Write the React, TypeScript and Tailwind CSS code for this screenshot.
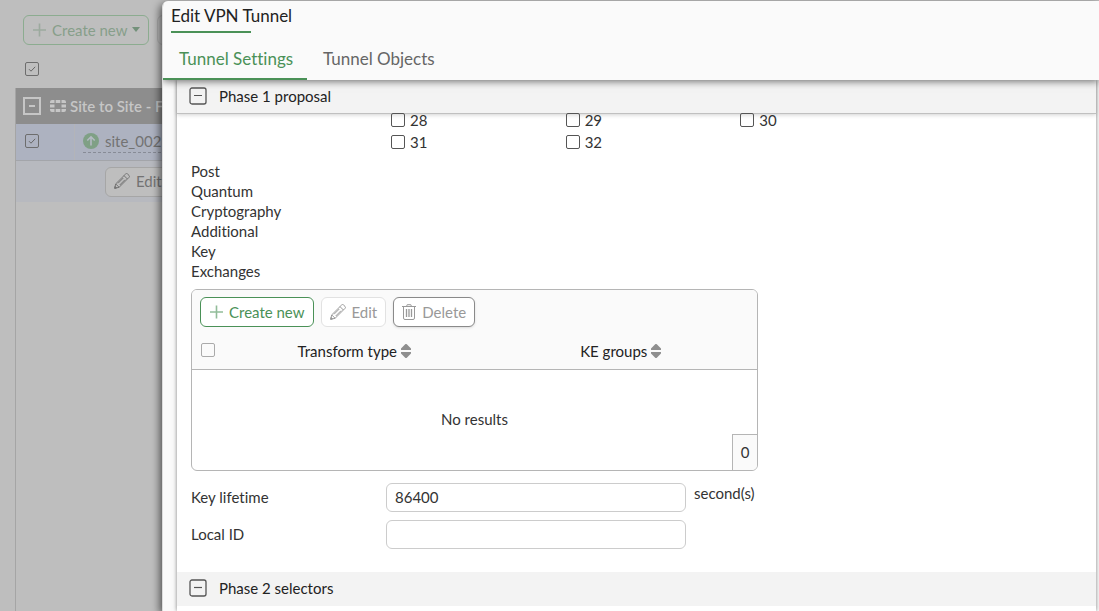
import React, { useState } from 'react';
import clsx from 'clsx';

interface SectionHeaderProps {
    title: string;
    sticky?: boolean;
}

interface ToolButtonProps {
    label: string;
    icon: React.ReactNode;
    className: string;
    disabled?: boolean;
}

const DH_GROUPS = ['28', '29', '30', '31', '32'];
const COLUMNS = ['Transform type', 'KE groups'];
const TABS = ['Tunnel Settings', 'Tunnel Objects'];

const PlusIcon = () => (
    <svg className="size-3.5 shrink-0 opacity-60" viewBox="0 0 14 14" fill="none" stroke="currentColor" strokeWidth="1.6">
        <path d="M7.500 .5v13M1 7h13" />
    </svg>
);

const PencilIcon = () => (
    <svg className="size-4 shrink-0" viewBox="0 0 16 16" fill="none" stroke="currentColor" strokeWidth="1" strokeLinejoin="round">
        <path d="M.7 15.3l1-4.4L11.6 1a1.4 1.4 0 0 1 2 0L15 2.4a1.4 1.4 0 0 1 0 2L5.1 14.3z" />
        <path d="M1.7 10.9l3.4 3.4M10 2.6l3.4 3.4M9.3 5L4 10.3M11 6.7L5.7 12" />
        <path d="M.7 15.3l.4-1.9 1.5 1.5z" fill="currentColor" />
    </svg>
);

const TrashIcon = () => (
    <svg className="h-4 w-3.5 shrink-0" viewBox="0 0 14 16" fill="none" stroke="currentColor" strokeWidth="1">
        <path d="M0 2.5h14M4.5 2.5l.7-1.8h3.6l.7 1.8M1.5 2.5v11.5a1.5 1.5 0 0 0 1.5 1.5h8a1.5 1.5 0 0 0 1.5-1.5V2.5" />
        <path d="M4.5 5v8M7 5v8M9.5 5v8" strokeWidth="1.3" />
    </svg>
);

const SortIcon = () => (
    <svg className="h-3.5 w-2.5 shrink-0 text-[#8f8f8f]" viewBox="0 0 10 14" fill="currentColor">
        <path d="M4.2.3a1.2 1.2 0 0 1 1.6 0L10 4.500V6H0V4.500zM4.200 13.700a1.200 1.200 0 0 0 1.600 0L10 9.500V8H0v1.500z" />
    </svg>
);

const FortinetIcon = () => (
    <svg className="h-3 w-4 shrink-0" viewBox="0 0 16 12" fill="currentColor">
        <path d="M5.7 0h4.6v3H5.700zM5.700 9h4.600v3H5.700zM0 4.500h4.500v3H0zM11.500 4.500H16v3h-4.500z" />
        <path d="M2 0h2.500v3H0V2a2 2 0 0 1 2-2zM11.500 0H14a2 2 0 0 1 2 2v1h-4.500zM0 9h4.500v3H2a2 2 0 0 1-2-2zM11.500 9H16v1a2 2 0 0 1-2 2h-2.500z" />
    </svg>
);

const MinusBox = () => (
    <svg className="size-[18px] shrink-0 text-[#555]" viewBox="0 0 18 18" fill="none" stroke="currentColor">
        <rect x="1" y="1" width="16" height="16" rx="2" strokeWidth="1.3" />
        <path d="M5 8.5h8" strokeWidth="1.2" />
    </svg>
);

const SectionHeader: React.FC<SectionHeaderProps> = ({ title, sticky }) => (
    <button
        className={clsx(
            'flex h-[34px] w-full shrink-0 items-center gap-3 bg-[#f3f3f3] px-3 pb-0.5 text-left text-[#222]',
            sticky && 'relative z-10 border-b border-[#c0c0c0] shadow-[0_1px_4px_rgba(0,0,0,0.18)]'
        )}
    >
        <MinusBox />
        {title}
    </button>
);

const ToolButton: React.FC<ToolButtonProps> = ({ label, icon, className, disabled }) => (
    <button
        disabled={disabled}
        className={clsx('flex h-[30px] shrink-0 items-center gap-1.5 rounded-md border px-2 pb-px whitespace-nowrap', className)}
    >
        {icon}
        {label}
    </button>
);

const CheckBox: React.FC<{ className: string; label: string; checked?: boolean }> = ({ className, label, checked }) => (
    <span className="relative flex size-3.5 shrink-0">
        <input
            type="checkbox"
            aria-label={label}
            defaultChecked={checked}
            className={clsx('size-3.5 appearance-none rounded-xs border', className)}
        />
        {checked && (
            <svg className="pointer-events-none absolute inset-0 size-3.5 text-[#666]" viewBox="0 0 14 14" fill="none" stroke="currentColor">
                <path d="M4 7.2l2 2 4.2-4.400" />
            </svg>
        )}
    </span>
);

/* Tunnel list, dimmed behind the drawer */
const TunnelList = () => (
    <div className="flex h-full flex-col overflow-hidden bg-[#bebebe] pl-[15px] text-[#737373]">
        <div className="flex h-[60px] items-center gap-2 pl-2">
            <ToolButton
                label="Create new"
                icon={<PlusIcon />}
                className="border-[#8cac90] text-[#879e8a] after:-ml-0.5 after:border-x-4 after:border-t-[5px] after:border-x-transparent after:border-t-[#73917a] after:content-['']"
            />
            <div className="h-[30px] w-20 rounded-md border border-[#adadad]" />
        </div>
        <div className="flex h-7 items-start pt-0.5 pl-2.5">
            <CheckBox label="Select all" checked className="border-[#6d6d6d]" />
        </div>
        <div className="flex-1 border-l border-[#a5a5a5]">
            <div className="flex h-9 items-center gap-2 bg-[#8d8d8d] pl-[7px] whitespace-nowrap text-[#c6c6c6]">
                <svg className="size-[18px] shrink-0" viewBox="0 0 18 18" fill="none" stroke="currentColor" strokeWidth="2">
                    <path d="M1 1h16v16H1zM6 9h6" />
                </svg>
                <div className="flex items-center gap-1 pl-px">
                    <FortinetIcon />
                    <span className="font-semibold">Site to Site - Fo</span>
                </div>
            </div>
            <div className="flex h-[37px] items-stretch border-b border-[#a3a5aa] bg-[#adb2c0]">
                <div className="flex w-[59px] shrink-0 items-center border-r border-[#b3b4b8] pb-0.5 pl-[9px]">
                    <CheckBox label="Select site_002" checked className="border-[#6d6d6d]" />
                </div>
                <div className="flex items-center pl-2">
                    <a href="#" className="flex h-[22px] items-center gap-1.5 border-b border-dashed border-[#878b96] pb-0.5">
                        <svg className="size-4 shrink-0" viewBox="0 0 16 16">
                            <circle cx="8" cy="8" r="8" fill="#7fa085" />
                            <path d="M8 12.5V4M4.3 7.5L8 3.8l3.7 3.7" fill="none" stroke="#b4bac3" strokeWidth="1.6" />
                        </svg>
                        site_002
                    </a>
                </div>
            </div>
            <div className="flex h-[41px] items-center bg-[#b7b9bf] pl-[89px]">
                <ToolButton label="Edit" icon={<PencilIcon />} className="border-[#a6a6a6] bg-[#bebebe]" />
            </div>
        </div>
    </div>
);

const KeyExchangeTable = () => (
    <div className="relative w-[567px] overflow-hidden rounded-md border border-[#b5b5b5]">
        <div className="flex h-11 items-center gap-[7px] bg-[#fafafa] px-2">
            <ToolButton label="Create new" icon={<PlusIcon />} className="border-[#4a9157] bg-white text-[#4a9157]" />
            <ToolButton label="Edit" disabled icon={<PencilIcon />} className="border-[#e2e2e2] bg-white text-[#999]" />
            <ToolButton label="Delete" icon={<TrashIcon />} className="border-[#8a8a8a] bg-white text-[#999] shadow-sm" />
        </div>
        <table className="w-full table-fixed border-collapse">
            <thead>
                <tr className="h-[35px] border-b border-[#b5b5b5] bg-[#fafafa]">
                    <th className="w-8 pb-0.5 pl-[9px]">
                        <CheckBox label="Select all rows" className="border-[#aaa]" />
                    </th>
                    {COLUMNS.map((name) => (
                        <th key={name} className="pr-1.5 pb-0.5 font-normal text-[#222]">
                            <button className="inline-flex items-center gap-1 align-middle">
                                {name}
                                <SortIcon />
                            </button>
                        </th>
                    ))}
                </tr>
            </thead>
            <tbody>
                <tr className="h-[101px]">
                    <td colSpan={3} className="pb-0.5 text-center">No results</td>
                </tr>
            </tbody>
        </table>
        <div className="absolute right-0 bottom-0 flex h-9 w-[25px] items-center justify-center border-t border-l border-[#b5b5b5] bg-[#fafafa] pb-0.5">
            0
        </div>
    </div>
);

const App: React.FC = () => {
    const [activeTab, setActiveTab] = useState(TABS[0]);

    return (
        <div className="relative h-screen overflow-hidden font-['Lato',sans-serif] text-[15px] leading-5 text-[#333] [font-variant-ligatures:none]">
            <TunnelList />

            <div
                role="dialog"
                aria-label="Edit VPN Tunnel"
                className="absolute top-px right-0 bottom-0 left-[162px] flex flex-col overflow-hidden rounded-tl-md border-l border-[#ddd] bg-[#fafafa] shadow-[-2px_3px_8px_rgba(0,0,0,0.6)]"
            >
                {/* Header */}
                <header className="relative z-20 flex h-[79px] shrink-0 flex-col justify-between bg-[#fafafa] shadow-[0_1px_8px_rgba(0,0,0,0.6)]">
                    <div className="pl-2">
                        <h1 className="pt-0.5 pb-0.5 text-[17px] leading-[26px] text-[#222]">Edit VPN Tunnel</h1>
                        <div className="h-0.5 w-20 bg-[#4a9157]" />
                    </div>
                    <div role="tablist" className="flex">
                        {TABS.map((tab) => (
                            <button
                                key={tab}
                                role="tab"
                                aria-selected={tab === activeTab}
                                onClick={() => setActiveTab(tab)}
                                className={clsx(
                                    'h-10 w-36 border-b-2 pl-4 text-left text-[17px] whitespace-nowrap',
                                    tab === activeTab ? 'border-[#4a9157] text-[#4a9157]' : 'border-transparent text-[#666]'
                                )}
                            >
                                {tab}
                            </button>
                        ))}
                    </div>
                </header>

                {/* Body */}
                <div className="flex flex-1 flex-col bg-[#fafafa] pr-[3px] pl-3.5">
                    <div className="flex flex-1 flex-col bg-white shadow-[0_0_4px_rgba(0,0,0,0.5)]">
                        <SectionHeader title="Phase 1 proposal" sticky />

                        <div className="relative z-10 -mt-px flex flex-col px-3.5">
                            <div className="ml-[200px] grid w-[524px] grid-cols-3 self-start pb-1">
                                {DH_GROUPS.map((group) => (
                                    <label key={group} className="flex h-[22px] items-start gap-[5px] leading-[14px]">
                                        <CheckBox label={group} className="border-[#555]" />
                                        {group}
                                    </label>
                                ))}
                            </div>

                            <div className="w-[93px] pb-2">Post Quantum Cryptography Additional Key Exchanges</div>

                            <KeyExchangeTable />

                            <div className="flex flex-col gap-2 pt-3 pb-[23px]">
                                <div className="flex items-center">
                                    <label htmlFor="lifetime" className="w-[195px] pb-0.5">Key lifetime</label>
                                    <input
                                        id="lifetime"
                                        defaultValue="86400"
                                        className="h-[29px] w-[300px] rounded-md border border-[#ccc] bg-white px-2 pb-0.5"
                                    />
                                    <span className="self-start pl-2">second(s)</span>
                                </div>
                                <div className="flex items-center">
                                    <label htmlFor="local-id" className="w-[195px] pb-0.5">Local ID</label>
                                    <input id="local-id" className="h-[29px] w-[300px] rounded-md border border-[#ccc] bg-white px-2 pb-0.5" />
                                </div>
                            </div>
                        </div>

                        <SectionHeader title="Phase 2 selectors" />
                    </div>
                </div>
            </div>
        </div>
    );
};

export default App;
